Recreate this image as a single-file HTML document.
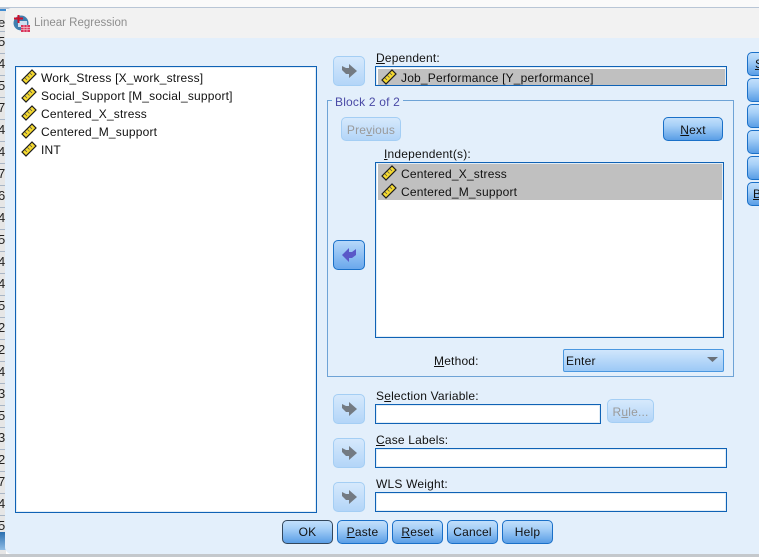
<!DOCTYPE html>
<html><head><meta charset="utf-8"><style>
html,body{margin:0;padding:0;width:759px;height:557px;overflow:hidden;background:#fff}
body{position:relative;font:12px "Liberation Sans",sans-serif;color:#111;letter-spacing:.19px}
div,span.a{position:absolute;box-sizing:border-box}
.t{white-space:nowrap;line-height:16px;height:16px}
.box{background:#fff;border:1px solid #0f62b5;box-shadow:inset 0 0 0 1px rgba(20,103,184,.12)}
.sel{background:#c0c0c0}
.btn{border:1px solid #1a70c8;border-radius:5px;background:linear-gradient(#c2dffb 0,#a6cff7 35%,#5a9ee6 100%);text-align:center;line-height:23px;height:25px;color:#111}
.dis{border:1px solid #a4cef4;border-radius:5px;background:linear-gradient(#d6e9fc,#b3d5f8);text-align:center;color:#9a9a9a}
svg{position:absolute;display:block}
.n{left:-2px;width:10px;text-align:left;height:16px;line-height:16px;font-size:13px;color:#222;white-space:nowrap;letter-spacing:0}
.ln{left:0;width:5px;height:1px;background:#a9b6c6}
u{text-decoration:underline}
</style></head><body>
<div style="left:0;top:0;width:759px;height:7px;background:#fafafa"></div>
<div style="left:0;top:7px;width:759px;height:2px;background:#b9c6d6"></div>
<div style="left:0;top:9px;width:6px;height:545px;background:#e6e6e6"></div>
<div style="left:0;top:9px;width:6px;height:2px;background:#3f8bd0"></div>
<div class="ln" style="top:31px"></div><div class="ln" style="top:53px"></div><div class="ln" style="top:75px"></div><div class="ln" style="top:97px"></div><div class="ln" style="top:119px"></div><div class="ln" style="top:141px"></div><div class="ln" style="top:163px"></div><div class="ln" style="top:185px"></div><div class="ln" style="top:207px"></div><div class="ln" style="top:229px"></div><div class="ln" style="top:251px"></div><div class="ln" style="top:273px"></div><div class="ln" style="top:295px"></div><div class="ln" style="top:317px"></div><div class="ln" style="top:339px"></div><div class="ln" style="top:361px"></div><div class="ln" style="top:383px"></div><div class="ln" style="top:405px"></div><div class="ln" style="top:427px"></div><div class="ln" style="top:449px"></div><div class="ln" style="top:471px"></div><div class="ln" style="top:493px"></div><div class="ln" style="top:515px"></div>
<div class="n" style="top:15px;left:-2px">e</div><div class="n" style="top:34px">5</div><div class="n" style="top:56px">4</div><div class="n" style="top:78px">5</div><div class="n" style="top:100px">7</div><div class="n" style="top:122px">4</div><div class="n" style="top:144px">4</div><div class="n" style="top:166px">7</div><div class="n" style="top:188px">6</div><div class="n" style="top:210px">4</div><div class="n" style="top:232px">5</div><div class="n" style="top:254px">4</div><div class="n" style="top:276px">4</div><div class="n" style="top:298px">5</div><div class="n" style="top:320px">2</div><div class="n" style="top:342px">2</div><div class="n" style="top:364px">4</div><div class="n" style="top:386px">3</div><div class="n" style="top:408px">5</div><div class="n" style="top:430px">3</div><div class="n" style="top:452px">2</div><div class="n" style="top:474px">7</div><div class="n" style="top:496px">4</div><div class="n" style="top:518px">5</div>
<div style="left:0;top:532px;width:6px;height:18px;background:linear-gradient(#2a6fb0,#8fbce6)"></div>
<div style="left:0;top:554px;width:759px;height:3px;background:#c4c8cc"></div>

<div style="left:5px;top:8px;width:754px;height:546px;background:#e3effb;border-radius:7px 0 0 7px;overflow:hidden">
  <div style="left:0;top:0;width:754px;height:30px;background:#f2f2f2"></div>
</div>
<svg style="left:13px;top:14px" width="17" height="18" viewBox="0 0 17 18"><circle cx="8" cy="9" r="7.500" fill="#3f7fb0"/><rect x="5" y="7" width="9" height="6" fill="#cfe0f0"/><path d="M5.500 1v8M1 4.500h9" stroke="#d0102a" stroke-width="2"/><rect x="8" y="11" width="9" height="7" fill="#d8355a"/><path d="M8 13.500h9M8 15.700h9M11 11v7M14 11v7" stroke="#f3c4cf" stroke-width=".7"/></svg>
<div class="t" style="left:34px;top:15px;color:#8e8e8e;font-size:11.5px;letter-spacing:0">Linear Regression</div>

<div class="box" style="left:15px;top:66px;width:302px;height:447px"></div>
<svg style="left:21px;top:69px" width="16" height="16" viewBox="0 0 16 16"><path d="M1 11 11 1l4 4L5 15z" fill="#f5d92f" stroke="#1c1c1c" stroke-width="1.2"/><path d="M4 9l2 2M6.500 6.500l2 2M9 4l2 2" stroke="#555" stroke-width=".8"/></svg>
<div class="t" style="left:41px;top:70px">Work_Stress [X_work_stress]</div>
<svg style="left:21px;top:87px" width="16" height="16" viewBox="0 0 16 16"><path d="M1 11 11 1l4 4L5 15z" fill="#f5d92f" stroke="#1c1c1c" stroke-width="1.2"/><path d="M4 9l2 2M6.500 6.500l2 2M9 4l2 2" stroke="#555" stroke-width=".8"/></svg>
<div class="t" style="left:41px;top:88px">Social_Support [M_social_support]</div>
<svg style="left:21px;top:105px" width="16" height="16" viewBox="0 0 16 16"><path d="M1 11 11 1l4 4L5 15z" fill="#f5d92f" stroke="#1c1c1c" stroke-width="1.2"/><path d="M4 9l2 2M6.500 6.500l2 2M9 4l2 2" stroke="#555" stroke-width=".8"/></svg>
<div class="t" style="left:41px;top:106px">Centered_X_stress</div>
<svg style="left:21px;top:123px" width="16" height="16" viewBox="0 0 16 16"><path d="M1 11 11 1l4 4L5 15z" fill="#f5d92f" stroke="#1c1c1c" stroke-width="1.2"/><path d="M4 9l2 2M6.500 6.500l2 2M9 4l2 2" stroke="#555" stroke-width=".8"/></svg>
<div class="t" style="left:41px;top:124px">Centered_M_support</div>
<svg style="left:21px;top:141px" width="16" height="16" viewBox="0 0 16 16"><path d="M1 11 11 1l4 4L5 15z" fill="#f5d92f" stroke="#1c1c1c" stroke-width="1.2"/><path d="M4 9l2 2M6.500 6.500l2 2M9 4l2 2" stroke="#555" stroke-width=".8"/></svg>
<div class="t" style="left:41px;top:142px">INT</div>

<div class="dis" style="left:333px;top:56px;width:32px;height:30px"></div>
<svg style="left:333px;top:56px" width="32" height="30" viewBox="0 0 32 30"><path d="M9 10 13 12h3V8l8 7-8 7v-4h-3l-4-4z" fill="#737a82"/></svg>
<div class="t" style="left:376px;top:50px"><u>D</u>ependent:</div>
<div class="box" style="left:375px;top:66px;width:352px;height:20px"><div class="sel" style="left:2px;top:2px;width:347px;height:16px"></div></div>
<svg style="left:381px;top:69px" width="16" height="16" viewBox="0 0 16 16"><path d="M1 11 11 1l4 4L5 15z" fill="#f5d92f" stroke="#1c1c1c" stroke-width="1.2"/><path d="M4 9l2 2M6.500 6.500l2 2M9 4l2 2" stroke="#555" stroke-width=".8"/></svg>
<div class="t" style="left:401px;top:70px">Job_Performance [Y_performance]</div>

<div style="left:327px;top:100px;width:407px;height:277px;border:1px solid #6ea3d6"></div>
<div class="t" style="left:332px;top:94px;background:#e3effb;padding:0 3px;color:#4a4aa6">Block 2 of 2</div>
<div class="dis" style="left:341px;top:117px;width:60px;height:24px;line-height:24px">Pre<u>v</u>ious</div>
<div class="btn" style="left:663px;top:117px;width:60px;height:24px;line-height:24px"><u>N</u>ext</div>
<div class="t" style="left:384px;top:146px"><u>I</u>ndependent(s):</div>
<div class="box" style="left:375px;top:162px;width:349px;height:176px"><div class="sel" style="left:2px;top:1px;width:344px;height:36px"></div></div>
<svg style="left:381px;top:165px" width="16" height="16" viewBox="0 0 16 16"><path d="M1 11 11 1l4 4L5 15z" fill="#f5d92f" stroke="#1c1c1c" stroke-width="1.2"/><path d="M4 9l2 2M6.500 6.500l2 2M9 4l2 2" stroke="#555" stroke-width=".8"/></svg>
<div class="t" style="left:401px;top:166px">Centered_X_stress</div>
<svg style="left:381px;top:183px" width="16" height="16" viewBox="0 0 16 16"><path d="M1 11 11 1l4 4L5 15z" fill="#f5d92f" stroke="#1c1c1c" stroke-width="1.2"/><path d="M4 9l2 2M6.500 6.500l2 2M9 4l2 2" stroke="#555" stroke-width=".8"/></svg>
<div class="t" style="left:401px;top:184px">Centered_M_support</div>

<div class="btn" style="left:333px;top:240px;width:32px;height:30px;background:linear-gradient(#b6d8fa,#6aa8ec)"></div>
<svg style="left:333px;top:240px" width="32" height="30" viewBox="0 0 32 30"><path d="M9 15l7-7v4h3l4-3v6l-4 3h-3v4z" fill="#5a58c8"/></svg>

<div class="t" style="left:434px;top:353px"><u>M</u>ethod:</div>
<div style="left:563px;top:349px;width:161px;height:23px;border:1px solid #4a97e0;border-radius:2px;background:linear-gradient(#d0e6fc,#9cc9f6)"></div>
<div class="t" style="left:566px;top:353px">Enter</div>
<svg style="left:706px;top:356px" width="14" height="8" viewBox="0 0 14 8"><path d="M1 1h11L6.500 6z" fill="#6a7078"/></svg>

<div class="dis" style="left:333px;top:394px;width:32px;height:30px"></div>
<svg style="left:333px;top:394px" width="32" height="30" viewBox="0 0 32 30"><path d="M9 10 13 12h3V8l8 7-8 7v-4h-3l-4-4z" fill="#737a82"/></svg>
<div class="t" style="left:376px;top:388px">S<u>e</u>lection Variable:</div>
<div class="box" style="left:375px;top:404px;width:226px;height:20px"></div>
<div class="dis" style="left:607px;top:399px;width:47px;height:24px;line-height:24px">R<u>u</u>le...</div>

<div class="dis" style="left:333px;top:438px;width:32px;height:30px"></div>
<svg style="left:333px;top:438px" width="32" height="30" viewBox="0 0 32 30"><path d="M9 10 13 12h3V8l8 7-8 7v-4h-3l-4-4z" fill="#737a82"/></svg>
<div class="t" style="left:376px;top:432px"><u>C</u>ase Labels:</div>
<div class="box" style="left:375px;top:448px;width:352px;height:20px"></div>

<div class="dis" style="left:333px;top:482px;width:32px;height:30px"></div>
<svg style="left:333px;top:482px" width="32" height="30" viewBox="0 0 32 30"><path d="M9 10 13 12h3V8l8 7-8 7v-4h-3l-4-4z" fill="#737a82"/></svg>
<div class="t" style="left:376px;top:476px">WLS Wei<u>g</u>ht:</div>
<div class="box" style="left:375px;top:492px;width:352px;height:20px"></div>

<div class="btn" style="left:282px;top:520px;width:51px;height:24px;border-color:#33475c">OK</div>
<div class="btn" style="left:337px;top:520px;width:51px;height:24px"><u>P</u>aste</div>
<div class="btn" style="left:392px;top:520px;width:51px;height:24px"><u>R</u>eset</div>
<div class="btn" style="left:447px;top:520px;width:51px;height:24px">Cancel</div>
<div class="btn" style="left:502px;top:520px;width:51px;height:24px">Help</div>

<div class="btn" style="left:747px;top:52px;width:40px;height:24px;text-align:left;padding-left:7px"><u>S</u></div>
<div class="btn" style="left:747px;top:78px;width:40px;height:24px"></div>
<div class="btn" style="left:747px;top:104px;width:40px;height:24px"></div>
<div class="btn" style="left:747px;top:130px;width:40px;height:24px"></div>
<div class="btn" style="left:747px;top:156px;width:40px;height:24px"></div>
<div class="btn" style="left:747px;top:182px;width:40px;height:24px;text-align:left;padding-left:5px"><u>B</u></div>
</body></html>
